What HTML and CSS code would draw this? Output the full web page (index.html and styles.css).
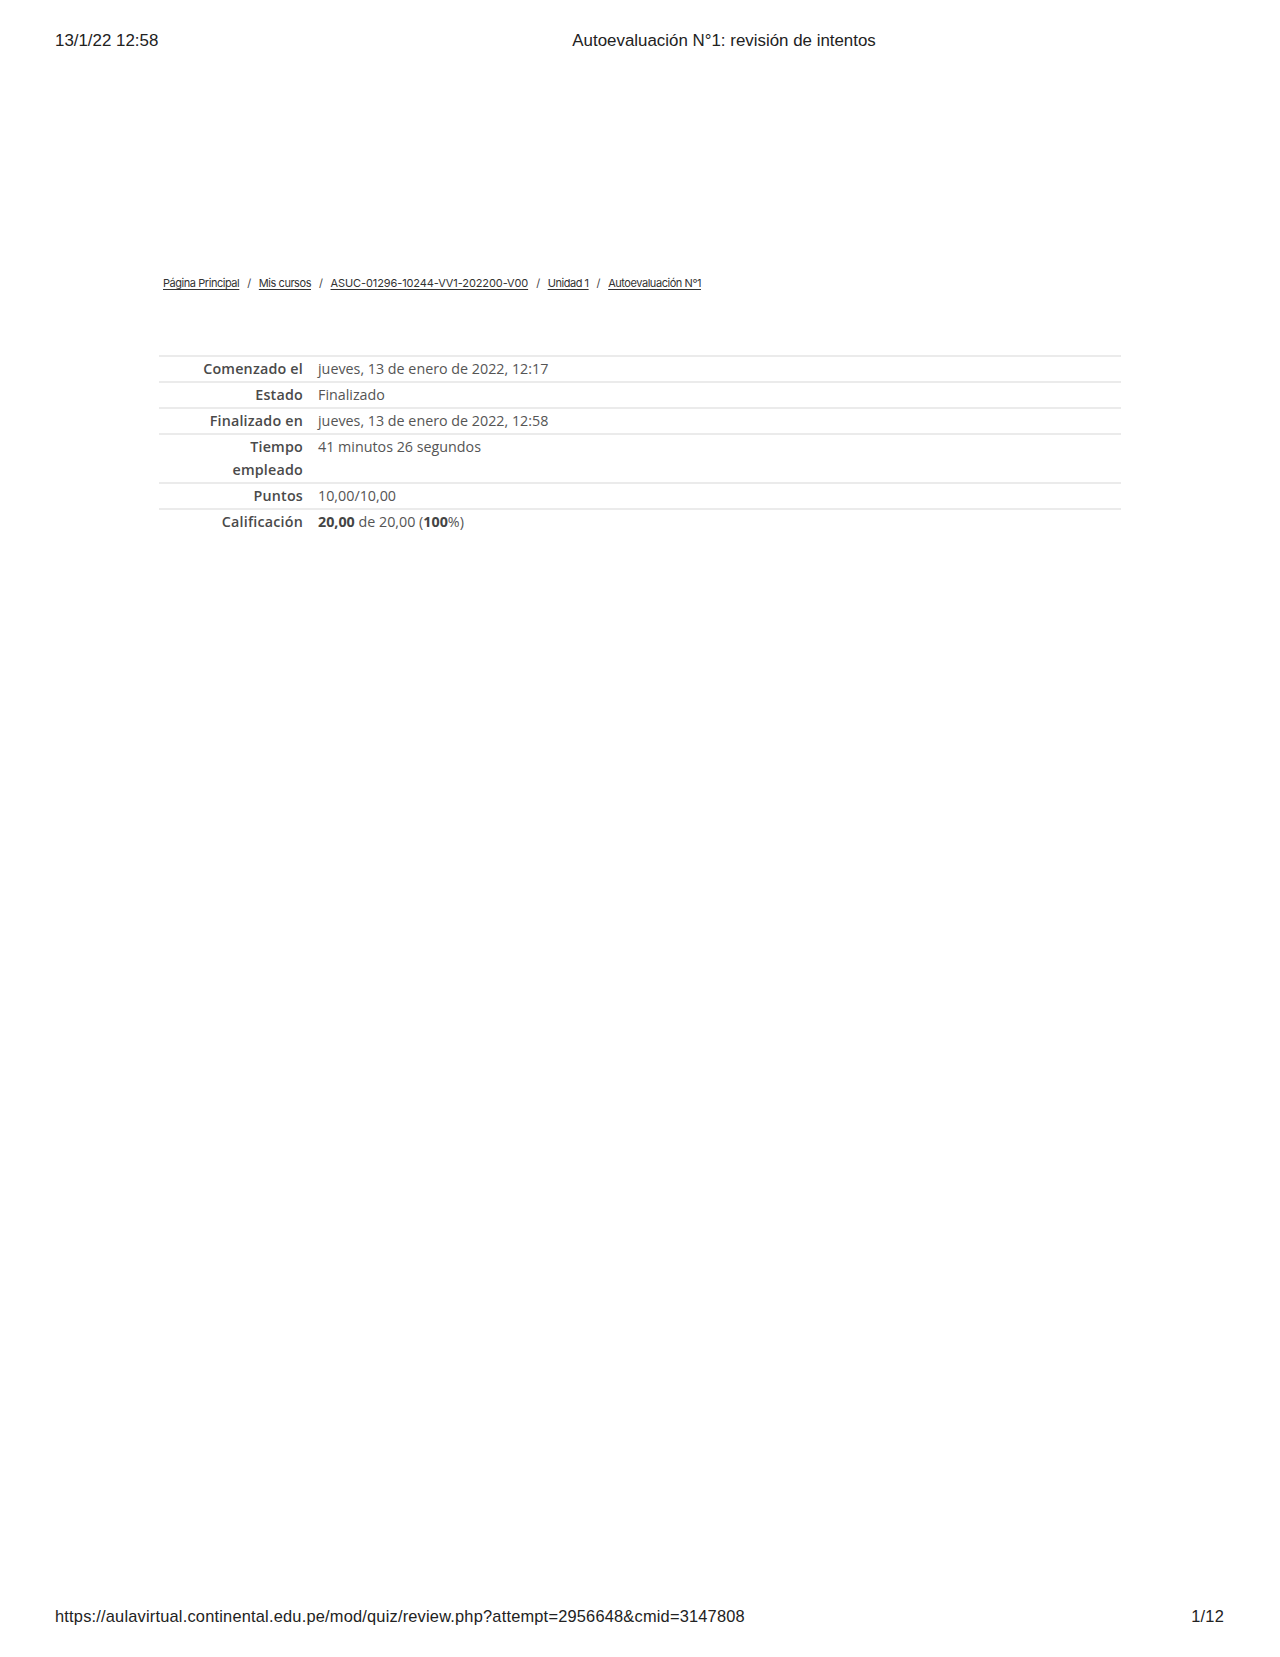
FILE: index.html
```html
<!DOCTYPE html>
<html lang="es">
<head>
<meta charset="utf-8">
<title>Autoevaluación N°1: revisión de intentos</title>
<link rel="stylesheet" href="styles.css">
</head>
<body>
<div class="page">
  <header class="print-head">
    <span class="date">13/1/22 12:58</span>
    <span class="title">Autoevaluación N°1: revisión de intentos</span>
  </header>
  <main class="content">
    <nav class="crumbs">
      <a href="#">Página Principal</a><span class="sep">/</span>
      <a href="#">Mis cursos</a><span class="sep">/</span>
      <a href="#" class="code">ASUC-01296-10244-VV1-202200-V00</a><span class="sep">/</span>
      <a href="#">Unidad 1</a><span class="sep">/</span>
      <a href="#">Autoevaluación N°1</a>
    </nav>
    <table class="summary">
      <tbody>
        <tr><th>Comenzado el</th><td>jueves, 13 de enero de 2022, 12:17</td></tr>
        <tr><th>Estado</th><td>Finalizado</td></tr>
        <tr><th>Finalizado en</th><td>jueves, 13 de enero de 2022, 12:58</td></tr>
        <tr><th>Tiempo<br>empleado</th><td>41 minutos 26 segundos</td></tr>
        <tr><th>Puntos</th><td>10,00/10,00</td></tr>
        <tr><th>Calificación</th><td><b>20,00</b> de 20,00 (<b>100</b>%)</td></tr>
      </tbody>
    </table>
  </main>
  <footer class="print-foot">
    <span class="url">https://aulavirtual.continental.edu.pe/mod/quiz/review.php?attempt=2956648&amp;cmid=3147808</span>
    <span class="pg">1/12</span>
  </footer>
</div>
</body>
</html>
```
FILE: styles.css
```css
html, body {
  margin: 0;
  padding: 0;
  background: #ffffff;
}
.page {
  width: 1280px;
  height: 1657px;
  display: flex;
  flex-direction: column;
  color: #222;
}
.print-head {
  display: flex;
  align-items: center;
  height: 20px;
  margin-top: 31px;
  padding-left: 55px;
  font-family: "Liberation Sans", Arial, sans-serif;
  font-size: 16.9px;
  color: #222;
}
.print-head .title {
  margin-left: 414px;
}
.content {
  flex: 1;
  padding-left: 159px;
  padding-top: 222px;
}
.crumbs {
  display: flex;
  align-items: center;
  height: 20px;
  padding-left: 4px;
  font-family: Inter, "Liberation Sans", sans-serif;
  font-size: 11px;
  letter-spacing: -0.45px;
}
.crumbs a {
  color: #333;
  text-decoration: underline;
  text-underline-offset: 2px;
}
.crumbs .code {
  letter-spacing: -0.1px;
}
.crumbs .sep {
  color: #444;
  margin: 0 8px;
}
.summary {
  margin-top: 62px;
  width: 962px;
  border-collapse: collapse;
  font-family: "Open Sans", "Noto Sans", sans-serif;
  font-size: 14.3px;
  color: #555;
}
.summary tr {
  border-top: 2px solid #ebebeb;
}
.summary th {
  width: 144px;
  text-align: right;
  font-weight: 600;
  letter-spacing: 0.2px;
  padding: 0 15px 1px 0;
  line-height: 23px;
  vertical-align: top;
  color: #4a4a4a;
}
.summary td {
  padding: 0 0 1px 0;
  line-height: 23px;
  vertical-align: top;
}
.summary b {
  font-weight: 700;
  color: #444;
}
.print-foot {
  display: flex;
  align-items: center;
  justify-content: space-between;
  height: 20px;
  margin-bottom: 31px;
  padding: 0 56px 0 55px;
  font-family: "Liberation Sans", Arial, sans-serif;
  font-size: 16.4px;
  letter-spacing: 0.2px;
  color: #222;
}
```
